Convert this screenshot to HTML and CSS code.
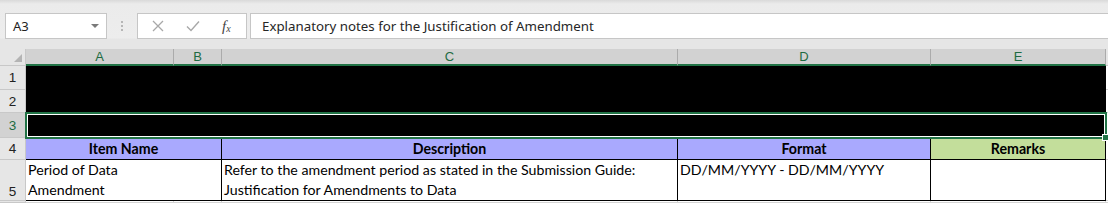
FILE: index.html
```html
<!DOCTYPE html>
<html lang="en">
<head>
  <meta charset="UTF-8" />
  <title>Justification of Amendment</title>
  <link rel="stylesheet" href="styles.css">
</head>
<body>

<div class="formula-bar">
  <div class="name-box">
    <span>A3</span>
    <span class="caret"></span>
  </div>
  <div class="grip"><i></i><i></i><i></i></div>
  <div class="fx-buttons">
    <svg width="12" height="12" viewBox="0 0 12 12"><path d="M1 1 L11 11 M11 1 L1 11" stroke="#a8a8a8" stroke-width="1.3" fill="none"/></svg>
    <svg width="14" height="12" viewBox="0 0 14 12"><path d="M1 6.5 L5 10.5 L13 1.5" stroke="#a8a8a8" stroke-width="1.4" fill="none"/></svg>
    <span class="fx">f<sub>x</sub></span>
  </div>
  <div class="formula-input">Explanatory notes for the Justification of Amendment</div>
</div>

<div class="sheet">
  <!-- column headers -->
  <div class="corner"><span class="tri"></span></div>
  <div class="col-hdr">A</div>
  <div class="col-hdr">B</div>
  <div class="col-hdr">C</div>
  <div class="col-hdr">D</div>
  <div class="col-hdr">E</div>
  <div class="col-hdr blank"></div>

  <!-- rows 1-2 -->
  <div class="row-hdr">1</div>
  <div class="title-block"></div>
  <div class="cell out"></div>
  <div class="row-hdr">2</div>
  <div class="cell out"></div>

  <!-- row 3 -->
  <div class="row-hdr active">3</div>
  <div class="subtitle"><span class="handle"></span></div>
  <div class="cell out"></div>

  <!-- row 4 -->
  <div class="row-hdr">4</div>
  <div class="th span2">Item Name</div>
  <div class="th">Description</div>
  <div class="th">Format</div>
  <div class="th green">Remarks</div>
  <div class="cell out"></div>

  <!-- row 5 -->
  <div class="row-hdr bottom">5</div>
  <div class="td span2">Period of Data<br>Amendment</div>
  <div class="td">Refer to the amendment period as stated in the Submission Guide:<br>Justification for Amendments to Data</div>
  <div class="td">DD/MM/YYYY - DD/MM/YYYY</div>
  <div class="td"></div>
  <div class="cell out"></div>

  <!-- row 6 (cut off) -->
  <div class="row-hdr"></div>
  <div class="cell"></div>
  <div class="cell"></div>
  <div class="cell"></div>
  <div class="cell"></div>
  <div class="cell"></div>
  <div class="cell out"></div>
</div>

</body>
</html>
```

FILE: styles.css
```css
body {
  margin: 0;
  width: 1108px;
  height: 203px;
  overflow: hidden;
  background: #ffffff;
  font-family: "Noto Sans", sans-serif;
}

.formula-bar {
  height: 49px;
  box-sizing: border-box;
  padding: 13px 0 0 5px;
  display: flex;
  align-items: flex-start;
  background: linear-gradient(#d9d9d9 0px, #ebebeb 4px, #ededed 38px, #e6e6e6 39px, #e6e6e6 49px);
}
.name-box {
  width: 102px;
  height: 26px;
  box-sizing: border-box;
  border: 1px solid #c6c6c6;
  background: #fff;
  display: flex;
  align-items: center;
  justify-content: space-between;
  padding: 0 7px 0 7px;
  font-size: 13px;
  color: #222;
}
.caret {
  width: 0;
  height: 0;
  border-left: 4px solid transparent;
  border-right: 4px solid transparent;
  border-top: 4px solid #7a7a7a;
}
.grip {
  width: 30px;
  height: 26px;
  display: flex;
  flex-direction: column;
  align-items: center;
  justify-content: center;
  gap: 2px;
}
.grip i {
  display: block;
  width: 2px;
  height: 2px;
  background: #b6b6b6;
}
.fx-buttons {
  width: 110px;
  height: 26px;
  box-sizing: border-box;
  border: 1px solid #c6c6c6;
  background: #fff;
  display: flex;
  align-items: center;
  padding-left: 14px;
  gap: 22px;
}
.fx {
  font-family: "Liberation Serif", serif;
  font-style: italic;
  font-size: 15px;
  color: #444;
  margin-left: 0;
}
.fx sub { font-size: 10px; vertical-align: -1px; }
.formula-input {
  margin-left: 3px;
  flex: 1;
  height: 26px;
  box-sizing: border-box;
  border: 1px solid #c6c6c6;
  border-right: none;
  background: #fff;
  padding-left: 11px;
  line-height: 24px;
  font-size: 13.3px;
  color: #262626;
}

.sheet {
  display: grid;
  grid-template-columns: 26px 148px 48px 456px 253px 175px 1fr;
  grid-template-rows: 17px 24px 23px 25px 22px 41px 2px;
  font-family: "Lato", sans-serif;
  font-size: 14.2px;
}
.corner {
  background: #e6e6e6;
  border-right: 1px solid #c8c8c8;
  border-bottom: 1px solid #c8c8c8;
  position: relative;
}
.tri {
  position: absolute;
  right: 3px;
  bottom: 3px;
  width: 0;
  height: 0;
  border-left: 8px solid transparent;
  border-bottom: 8px solid #b4b4b4;
}
.col-hdr {
  background: #d2d2d2;
  border-right: 1px solid #ababab;
  border-bottom: 2px solid #217346;
  text-align: center;
  color: #1e6b42;
  font-family: "Liberation Sans", sans-serif;
  font-size: 13px;
  line-height: 15px;
}
.col-hdr.blank {
  background: #e6e6e6;
  border-right: none;
  border-bottom: 1px solid #c8c8c8;
}
.row-hdr {
  background: #e6e6e6;
  border-right: 1px solid #c8c8c8;
  border-bottom: 1px solid #c8c8c8;
  color: #222;
  font-family: "Liberation Sans", sans-serif;
  font-size: 13.5px;
  display: flex;
  align-items: center;
  justify-content: center;
}
.row-hdr.active {
  background: #d2d2d2;
  color: #1e6b42;
}
.row-hdr.bottom {
  align-items: flex-end;
  padding-bottom: 1px;
}
.title-block {
  grid-column: 2 / 7;
  grid-row: 2 / 4;
  background: #000;
}
.subtitle {
  grid-column: 2 / 7;
  background: #000;
  position: relative;
  outline: 2px solid #217346;
  outline-offset: -1px;
  box-shadow: inset 0 0 0 2px #fff;
}
.handle {
  position: absolute;
  right: -3px;
  bottom: -3px;
  width: 5px;
  height: 5px;
  background: #217346;
  border: 1px solid #fff;
}
.cell {
  border-right: 1px solid #d4d4d4;
  border-bottom: 1px solid #d4d4d4;
  background: #fff;
}
.cell.out { border-right: none; }
.th {
  background: #a9a9fe;
  border-right: 1px solid #000;
  border-bottom: 1px solid #000;
  font-weight: bold;
  text-align: center;
  line-height: 21px;
  color: #000;
}
.th.green { background: #c3de9b; }
.span2 { grid-column: span 2; }
.td {
  background: #fff;
  border-right: 1px solid #000;
  border-bottom: 1px solid #000;
  padding: 0 2px;
  line-height: 20px;
  color: #000;
}
```
